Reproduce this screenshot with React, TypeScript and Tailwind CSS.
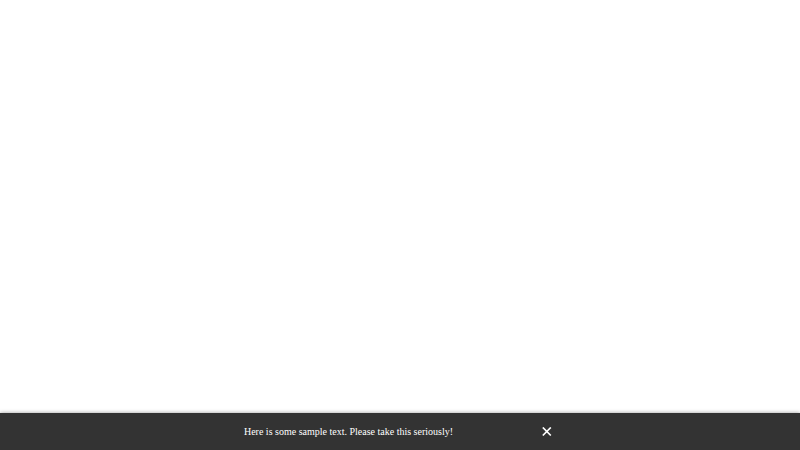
import React, { useState } from 'react';

const NoticeBar: React.FC<{ message: string; onClose: () => void }> = ({ message, onClose }) => (
  <div
    role="status"
    className="flex justify-center items-center gap-[85px] h-[37px] px-4 bg-[#333333] text-white shadow-[0_0_4px_rgba(0,0,0,0.4)]"
  >
    <p className="text-[10px] leading-4">{message}</p>
    <button type="button" onClick={onClose} aria-label="Close" className="p-1 cursor-pointer">
      <svg viewBox="0 0 10 10" className="w-[10px] h-[10px]" fill="none" stroke="currentColor" strokeWidth="1.7">
        <path d="M0.8 0.5L8.8 8.5M8.8 0.5L0.8 8.5" />
      </svg>
    </button>
  </div>
);

const App: React.FC = () => {
  const [open, setOpen] = useState(true);

  return (
    <div className="min-h-screen flex flex-col justify-end bg-white font-['Liberation_Serif',serif]">
      {open && (
        <NoticeBar
          message="Here is some sample text. Please take this seriously!"
          onClose={() => setOpen(false)}
        />
      )}
    </div>
  );
};

export default App;
